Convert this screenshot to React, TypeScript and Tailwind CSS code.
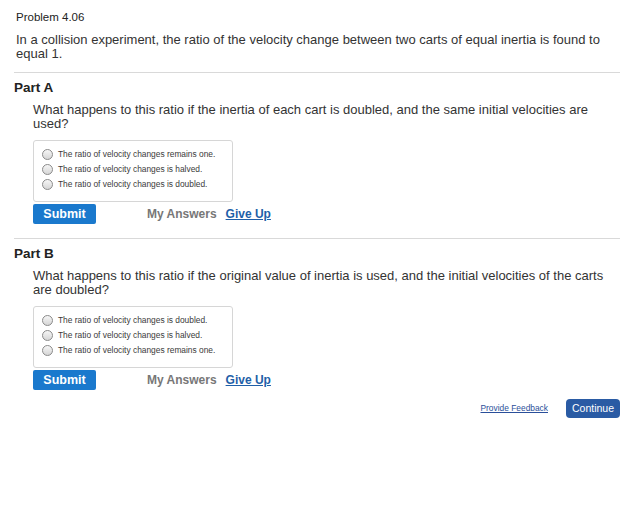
const partA = [
  "The ratio of velocity changes remains one.",
  "The ratio of velocity changes is halved.",
  "The ratio of velocity changes is doubled.",
];

const partB = [
  "The ratio of velocity changes is doubled.",
  "The ratio of velocity changes is halved.",
  "The ratio of velocity changes remains one.",
];

const Radio = () => (
  <span className="inline-block w-[11px] h-[11px] rounded-full border border-[#8a8a8a] bg-gradient-to-b from-[#f6f6f6] to-[#d6d6d6] shrink-0" />
);

const Part = ({ title, question, options }: { title: string; question: string; options: string[] }) => (
  <div className="border-t border-[#d9d9d9] pt-[7px] pb-[14px]">
    <h2 className="text-[13.5px] font-bold leading-[16px] text-[#222]">{title}</h2>
    <div className="pl-[19px] mt-[7px]">
      <p className="text-[13px] leading-[13.5px] text-[#333]">{question}</p>
      <div className="mt-[10px] w-[200px] h-[62px] border border-[#d6d6d6] rounded-[3px] pl-[8px] pt-[6px] flex flex-col">
        {options.map((o) => (
          <label key={o} className="flex items-center gap-[5px] h-[15px] text-[8.4px] text-[#3a3a3a]">
            <Radio />
            {o}
          </label>
        ))}
      </div>
      <div className="flex items-center mt-[2px]">
        <button className="w-[63px] h-[20px] bg-[#1a79cd] rounded-[2px] text-white font-bold text-[12.5px] leading-[20px]">
          Submit
        </button>
        <span className="ml-[51px] text-[12px] font-bold text-[#777]">My Answers</span>
        <span className="ml-[9px] text-[12px] font-bold text-[#1f5fa8] underline">Give Up</span>
      </div>
    </div>
  </div>
);

export default function App() {
  return (
    <div className="w-[633px] h-[508px] bg-white font-['Liberation_Sans',Arial,sans-serif] px-[14px] pt-[10px]">
      <div className="px-[2px]">
        <div className="text-[11.5px] leading-[14px] text-[#222]">Problem 4.06</div>
        <p className="mt-[9px] text-[13px] leading-[13.5px] text-[#333]">
          In a collision experiment, the ratio of the velocity change between two carts of equal inertia is found to
          equal 1.
        </p>
      </div>
      <div className="mt-[12px] w-[606px]">
        <Part
          title="Part A"
          question="What happens to this ratio if the inertia of each cart is doubled, and the same initial velocities are used?"
          options={partA}
        />
        <Part
          title="Part B"
          question="What happens to this ratio if the original value of inertia is used, and the initial velocities of the carts are doubled?"
          options={partB}
        />
      </div>
      <div className="w-[606px] flex justify-end items-center gap-[18px] -mt-[5px]">
        <a className="text-[8.4px] text-[#2a4f9a] underline">Provide Feedback</a>
        <button className="w-[54px] h-[19px] bg-[#2a5ba4] rounded-[4px] text-white text-[10.5px] leading-[19px]">
          Continue
        </button>
      </div>
    </div>
  );
}
